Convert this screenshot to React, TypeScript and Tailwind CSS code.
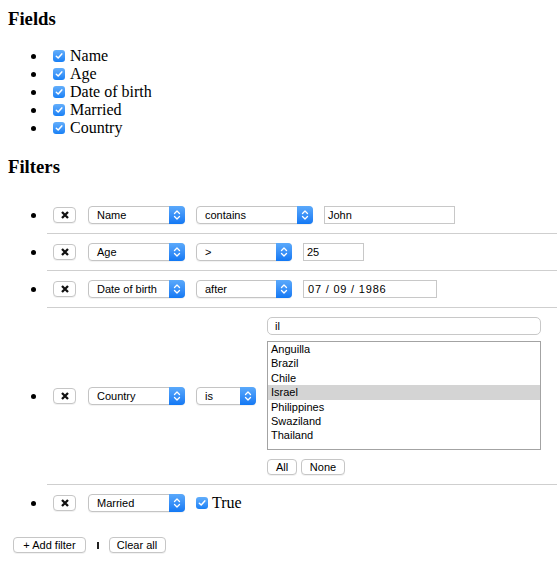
const fields = ['Name', 'Age', 'Date of birth', 'Married', 'Country'];

const countries = ['Anguilla', 'Brazil', 'Chile', 'Israel', 'Philippines', 'Swaziland', 'Thailand'];

const ui = "font-['Liberation_Sans',Arial,sans-serif] text-[11px] text-black";

function Checkbox() {
  return (
    <span className="flex h-[12px] w-[12px] items-center justify-center rounded-[3px] bg-gradient-to-b from-[#62aefb] to-[#1580f6]">
      <svg width="10" height="10" viewBox="0 0 10 10" fill="none">
        <path d="M2.3 5.2 L4.2 7 L7.8 2.9" stroke="#fff" strokeWidth="1.5" strokeLinecap="round" strokeLinejoin="round" />
      </svg>
    </span>
  );
}

function RemoveButton() {
  return (
    <button className="mr-px flex h-[16px] w-[23px] items-center justify-center rounded-[4px] border border-[#c6c6c6] bg-white shadow-[0_1px_0_rgba(0,0,0,0.05)]">
      <svg width="8" height="8" viewBox="0 0 8 8">
        <path d="M1 1 L7 7 M7 1 L1 7" stroke="#111" strokeWidth="2.3" />
      </svg>
    </button>
  );
}

function Select({ label, className }: { label: string; className: string }) {
  return (
    <div className={`flex h-[18px] rounded-[4px] border border-[#c4c4c4] bg-white shadow-[0_1px_1px_rgba(0,0,0,0.06)] ${className}`}>
      <span className={`flex-1 pl-[8px] leading-[16px] ${ui}`}>{label}</span>
      <span className="-my-px -mr-px flex w-[16px] items-center justify-center rounded-r-[4px] bg-gradient-to-b from-[#5aa9fb] to-[#1078f4]">
        <svg width="8" height="12" viewBox="0 0 8 12" fill="none">
          <path d="M1.5 4.5 L4 2 L6.5 4.5 M1.5 7.5 L4 10 L6.5 7.5" stroke="#fff" strokeWidth="1.3" strokeLinecap="round" strokeLinejoin="round" />
        </svg>
      </span>
    </div>
  );
}

function TextBox({ value, className }: { value: string; className: string }) {
  return (
    <div className={`h-[18px] border border-[#c8c8c8] bg-white pl-[3px] leading-[16px] ${ui} ${className}`}>
      {value}
    </div>
  );
}

function SmallButton({ label, className }: { label: string; className: string }) {
  return (
    <button className={`h-[16px] rounded-[4px] border border-[#c6c6c6] bg-white text-center leading-[14px] shadow-[0_1px_0_rgba(0,0,0,0.05)] ${ui} ${className}`}>
      {label}
    </button>
  );
}

function FilterRow({ children, last }: { children: React.ReactNode; last?: boolean }) {
  return (
    <li className="flex items-center">
      <span className="ml-[23px] h-[5px] w-[5px] rounded-full bg-black" />
      <div className={`ml-[11px] flex flex-1 items-center gap-[11px] py-[9px] pl-[6px] ${last ? '' : 'border-b border-[#cfcfcf]'}`}>
        {children}
      </div>
    </li>
  );
}

export default function App() {
  return (
    <div className="min-h-[565px] bg-white pt-2 pl-2 font-['Liberation_Serif','Times_New_Roman',serif] text-black">
      <h3 className="text-[18.72px] font-bold leading-[21px]">Fields</h3>
      <ul className="mt-[18px]">
        {fields.map((f) => (
          <li key={f} className="flex h-[18px] items-center">
            <span className="ml-[23px] h-[5px] w-[5px] rounded-full bg-black" />
            <span className="ml-[17px]">
              <Checkbox />
            </span>
            <span className="ml-[5px] text-[16px] leading-[18px]">{f}</span>
          </li>
        ))}
      </ul>

      <h3 className="mt-[19px] text-[18.72px] font-bold leading-[21px]">Filters</h3>
      <ul className="mt-[20px]">
        <FilterRow>
          <RemoveButton />
          <Select label="Name" className="w-[97px]" />
          <Select label="contains" className="w-[117px]" />
          <TextBox value="John" className="w-[131px]" />
        </FilterRow>
        <FilterRow>
          <RemoveButton />
          <Select label="Age" className="w-[97px]" />
          <Select label=">" className="w-[96px]" />
          <TextBox value="25" className="w-[61px]" />
        </FilterRow>
        <FilterRow>
          <RemoveButton />
          <Select label="Date of birth" className="w-[97px]" />
          <Select label="after" className="w-[96px]" />
          <TextBox value="07 / 09 / 1986" className="w-[134px] pl-[4px] tracking-[0.8px]" />
        </FilterRow>
        <FilterRow>
          <RemoveButton />
          <Select label="Country" className="w-[97px]" />
          <Select label="is" className="w-[60px]" />
          <div className="flex flex-col">
            <div className={`h-[18px] w-[274px] rounded-[5px] border border-[#c8c8c8] bg-white pl-[7px] leading-[16px] ${ui}`}>
              il
            </div>
            <div className={`mt-[6px] h-[109px] w-[274px] border border-[#a3a3a3] bg-white ${ui}`}>
              {countries.map((c) => (
                <div key={c} className={`h-[14.4px] pl-[3px] leading-[14.4px] ${c === 'Israel' ? 'bg-[#d4d4d4]' : ''}`}>
                  {c}
                </div>
              ))}
            </div>
            <div className="mt-[9px] flex gap-[4px]">
              <SmallButton label="All" className="w-[30px]" />
              <SmallButton label="None" className="w-[44px]" />
            </div>
          </div>
        </FilterRow>
        <FilterRow last>
          <RemoveButton />
          <Select label="Married" className="w-[97px]" />
          <div className="flex items-center gap-[4px]">
            <Checkbox />
            <span className="text-[16px] leading-[18px]">True</span>
          </div>
        </FilterRow>
      </ul>

      <div className="mt-[16px] ml-[5px] flex items-center">
        <SmallButton label="+ Add filter" className="w-[73px]" />
        <span className="ml-[11px] h-[7px] w-[1.5px] bg-[#222]" />
        <SmallButton label="Clear all" className="ml-[10px] w-[57px]" />
      </div>
    </div>
  );
}
